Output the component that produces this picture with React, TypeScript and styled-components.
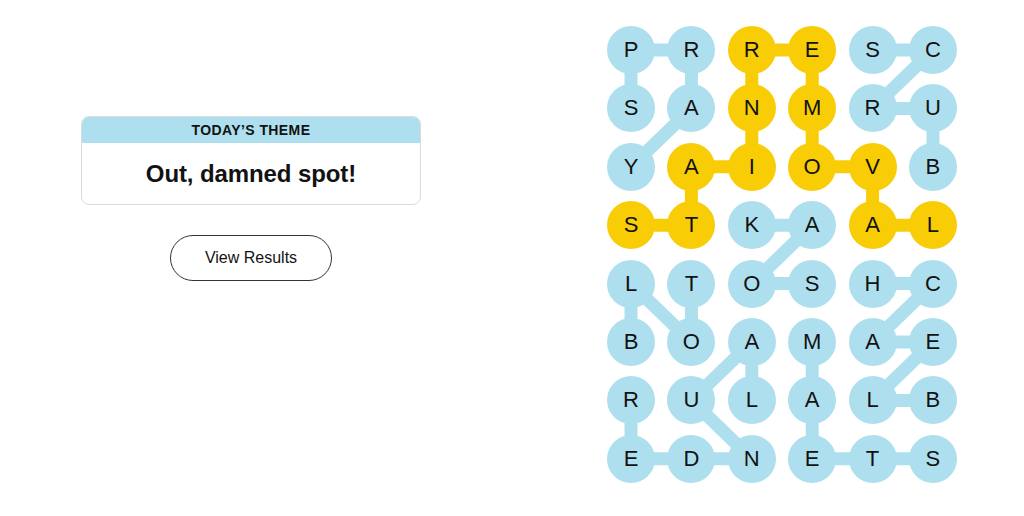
import React from "react";
import styled, { createGlobalStyle } from "styled-components";

const GlobalStyle = createGlobalStyle`
  html, body { margin: 0; padding: 0; background: #ffffff; }
  body { font-family: "Liberation Sans", Arial, sans-serif; color: #121212; }
`;

const BLUE = "#aedfee";
const YELLOW = "#f8cd05";
const CELL = 48;
const COL_GAP = 12.4;
const ROW_GAP = 10.4;

const LETTERS = [
  "PRRESC",
  "SANMRU",
  "YAIOVB",
  "STKAAL",
  "LTOSHC",
  "BOAMAE",
  "RULALB",
  "EDNETS",
];

type Cell = [number, number];
type Word = { path: Cell[]; spangram?: boolean };

const WORDS: Word[] = [
  { path: [[1, 0], [0, 0], [0, 1], [1, 1], [2, 0]] },
  { path: [[0, 4], [0, 5], [1, 4], [1, 5], [2, 5]] },
  {
    spangram: true,
    path: [[3, 0], [3, 1], [2, 1], [2, 2], [1, 2], [0, 2], [0, 3], [1, 3], [2, 3], [2, 4], [3, 4], [3, 5]],
  },
  { path: [[4, 3], [4, 2], [3, 3], [3, 2]] },
  { path: [[5, 0], [4, 0], [5, 1], [4, 1]] },
  { path: [[6, 5], [6, 4], [5, 5], [5, 4], [4, 5], [4, 4]] },
  { path: [[6, 2], [5, 2], [6, 1], [7, 2], [7, 1], [7, 0], [6, 0]] },
  { path: [[7, 5], [7, 4], [7, 3], [6, 3], [5, 3]] },
];

const cx = (c: number) => CELL / 2 + c * (CELL + COL_GAP);
const cy = (r: number) => CELL / 2 + r * (CELL + ROW_GAP);
const BOARD_W = CELL * 6 + COL_GAP * 5;
const BOARD_H = CELL * 8 + ROW_GAP * 7;

const Page = styled.main`
  display: flex;
  align-items: flex-start;
  padding-top: 26px;
  min-height: 516px;
  box-sizing: border-box;
`;

const LeftPanel = styled.section`
  display: flex;
  flex-direction: column;
  align-items: center;
  width: 340px;
  margin-left: 81px;
  margin-top: 90px;
`;

const ThemeCard = styled.div`
  width: 100%;
  border: 1px solid #dcdcdc;
  border-radius: 8px;
  overflow: hidden;
  box-sizing: border-box;
  display: flex;
  flex-direction: column;
`;

const ThemeHeader = styled.div`
  background: ${BLUE};
  height: 26px;
  display: flex;
  align-items: center;
  justify-content: center;
  font-size: 14px;
  font-weight: 700;
  letter-spacing: 0.4px;
  color: #121212;
`;

const ThemeTitle = styled.div`
  height: 61px;
  display: flex;
  align-items: center;
  justify-content: center;
  font-size: 24px;
  font-weight: 700;
  letter-spacing: -0.1px;
  color: #121212;
`;

const ResultsButton = styled.button`
  margin-top: 30px;
  width: 162px;
  height: 46px;
  border-radius: 23px;
  border: 1.5px solid #333333;
  background: #ffffff;
  font-family: "Liberation Sans", Arial, sans-serif;
  font-size: 16px;
  color: #121212;
  cursor: pointer;
`;

const Board = styled.div`
  position: relative;
  margin-left: 186px;
  width: ${BOARD_W}px;
  height: ${BOARD_H}px;
`;

const Connectors = styled.svg`
  position: absolute;
  left: 0;
  top: 0;
  z-index: 0;
`;

const LetterGrid = styled.div`
  position: relative;
  z-index: 1;
  display: grid;
  grid-template-columns: repeat(6, ${CELL}px);
  grid-auto-rows: ${CELL}px;
  column-gap: ${COL_GAP}px;
  row-gap: ${ROW_GAP}px;
`;

const LetterCell = styled.div<{ $spangram: boolean }>`
  width: ${CELL}px;
  height: ${CELL}px;
  border-radius: 50%;
  background: ${(p) => (p.$spangram ? YELLOW : BLUE)};
  display: flex;
  align-items: center;
  justify-content: center;
  font-size: 22px;
  font-weight: 400;
  color: #121212;
`;

export default function App() {
  const spanSet = new Set<string>();
  WORDS.filter((w) => w.spangram).forEach((w) =>
    w.path.forEach(([r, c]) => spanSet.add(`${r}-${c}`))
  );

  return (
    <>
      <GlobalStyle />
      <Page>
        <LeftPanel>
          <ThemeCard>
            <ThemeHeader>TODAY’S THEME</ThemeHeader>
            <ThemeTitle>Out, damned spot!</ThemeTitle>
          </ThemeCard>
          <ResultsButton>View Results</ResultsButton>
        </LeftPanel>
        <Board>
          <Connectors width={BOARD_W} height={BOARD_H} viewBox={`0 0 ${BOARD_W} ${BOARD_H}`}>
            {WORDS.map((w, wi) =>
              w.path.slice(1).map(([r, c], i) => {
                const [pr, pc] = w.path[i];
                return (
                  <line
                    key={`${wi}-${i}`}
                    x1={cx(pc)}
                    y1={cy(pr)}
                    x2={cx(c)}
                    y2={cy(r)}
                    stroke={w.spangram ? YELLOW : BLUE}
                    strokeWidth={13}
                  />
                );
              })
            )}
          </Connectors>
          <LetterGrid>
            {LETTERS.map((row, r) =>
              row.split("").map((ch, c) => (
                <LetterCell key={`${r}-${c}`} $spangram={spanSet.has(`${r}-${c}`)}>
                  {ch}
                </LetterCell>
              ))
            )}
          </LetterGrid>
        </Board>
      </Page>
    </>
  );
}
